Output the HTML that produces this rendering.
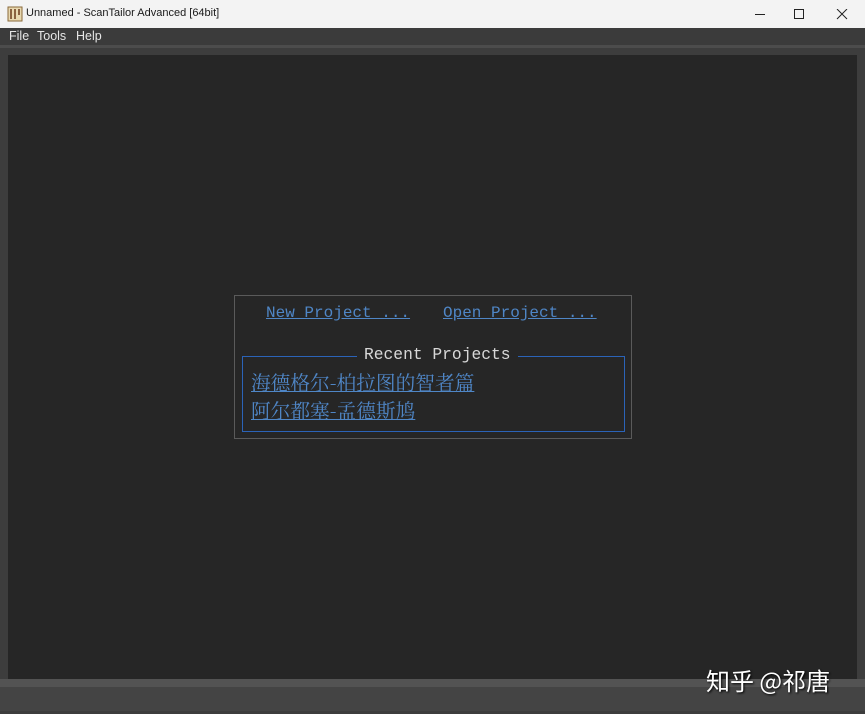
<!DOCTYPE html>
<html><head><meta charset="utf-8"><style>
*{margin:0;padding:0;box-sizing:border-box}
body{width:865px;height:714px;background:#3d3d3d;position:relative;overflow:hidden;font-family:"Segoe UI","Liberation Sans",sans-serif}
.title{position:absolute;left:0;top:0;width:865px;height:28px;background:#f3f3f3;color:#1a1a1a;font-size:11px}
.title span{position:absolute;left:26px;top:7px}
.menu{position:absolute;top:28px;left:0;width:865px;height:18px;background:#3b3b3b;color:#e6e6e6;font-size:12.5px}
.menu span{position:absolute;top:1px}
.sep{position:absolute;top:45px;left:0;width:865px;height:3px;background:#4c4c4c}
.main{position:absolute;left:8px;top:55px;width:849px;height:624px;background:#262626}
.bot1{position:absolute;left:0;top:679px;width:865px;height:8px;background:#535353}
.bot2{position:absolute;left:0;top:687px;width:865px;height:24px;background:#444}
.box{position:absolute;left:234px;top:295px;width:398px;height:144px;border:1px solid #5a5a5a;background:#262626}
a{color:#4f86c6;text-decoration:underline;font-family:"Liberation Mono","Noto Serif CJK SC",monospace;font-size:16px;position:absolute;white-space:nowrap}
.grp{position:absolute;left:7px;top:60px;width:383px;height:76px;border:1px solid #2b63b8}
.leg{position:absolute;left:114px;top:-12px;background:#262626;padding:0 7px;color:#d8d8d8;font-family:"Liberation Mono",monospace;font-size:16.3px}
.cj{font-family:"Noto Serif CJK SC","Liberation Serif",serif;font-size:19.7px}
</style></head><body>
<div class="title">
<svg style="position:absolute;left:7px;top:6px" width="16" height="16"><rect x="1" y="1" width="14" height="14" fill="#e8d8b0" stroke="#8a6a3a"/><path d="M4 3v10M8 3v10M12 3v6" stroke="#6a3a1a" stroke-width="1.5"/></svg>
<span>Unnamed - ScanTailor Advanced [64bit]</span>
<svg style="position:absolute;left:755px;top:9px" width="100" height="12" stroke="#222" fill="none" stroke-width="1"><path d="M0 5.5h10"/><rect x="39.5" y="0.5" width="9" height="9"/><path d="M82 0l10 10M92 0l-10 10"/></svg>
</div>
<div class="menu"><span style="left:9px">File</span><span style="left:37px">Tools</span><span style="left:76px">Help</span></div>
<div class="sep"></div>
<div class="main"></div>
<div class="bot1"></div><div class="bot2"></div>
<div class="box">
<a style="left:31px;top:8px">New Project ...</a>
<a style="left:208px;top:8px">Open Project ...</a>
<div class="grp"><div class="leg">Recent Projects</div>
<a class="cj" style="left:8px;top:10px">海德格尔-柏拉图的智者篇</a>
<a class="cj" style="left:8px;top:38px">阿尔都塞-孟德斯鸠</a>
</div></div>
<div style="position:absolute;left:706px;top:662px;color:#fff;font-family:'Noto Sans CJK SC',sans-serif;font-size:24px;text-shadow:1px 1px 2px #000">知乎 @祁唐</div>
</body></html>
